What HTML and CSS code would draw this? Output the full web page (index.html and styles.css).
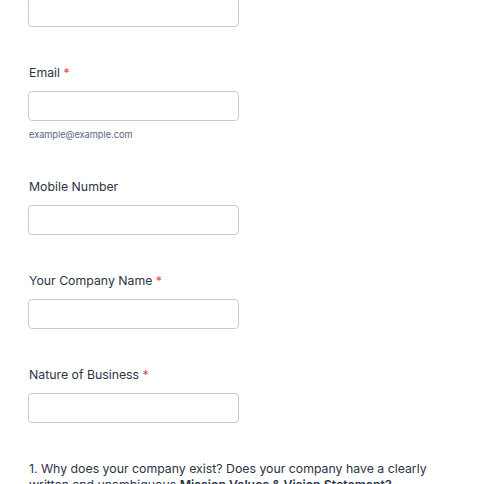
FILE: index.html
```html
<!DOCTYPE html>
<html>
<head>
<meta charset="utf-8">
<link rel="stylesheet" href="styles.css">
</head>
<body>
<form class="form">
  <div class="field">
    <input class="input" type="text">
  </div>
  <div class="field">
    <label class="label">Email <span class="req">*</span></label>
    <input class="input" type="text">
    <div class="help">example@example.com</div>
  </div>
  <div class="field">
    <label class="label">Mobile Number</label>
    <input class="input" type="text">
  </div>
  <div class="field">
    <label class="label">Your Company Name <span class="req">*</span></label>
    <input class="input" type="text">
  </div>
  <div class="field">
    <label class="label">Nature of Business <span class="req">*</span></label>
    <input class="input" type="text">
  </div>
  <div class="field">
    <p class="question">1. Why does your company exist? Does your company have a clearly written and unambiguous <b>Mission Values &amp; Vision Statement?</b></p>
  </div>
</form>
</body>
</html>
```
FILE: styles.css
```css
html, body {
  margin: 0;
  padding: 0;
  background: #ffffff;
}
body {
  font-family: Inter, "Noto Sans", sans-serif;
  color: #2c3345;
}
.form {
  display: flex;
  flex-direction: column;
  gap: 35px;
  padding: 0 0 0 28px;
  margin-top: -3px;
}
.field {
  display: flex;
  flex-direction: column;
}
.label {
  font-size: 12.3px;
  line-height: 20px;
  padding-top: 1px;
  margin-bottom: 8px;
  padding-left: 1px;
  font-weight: 400;
}
.req {
  color: #ea4545;
}
.input {
  box-sizing: border-box;
  width: 211px;
  height: 30px;
  margin: 0;
  border: 1px solid #c3cad8;
  border-radius: 4px;
  background: #fff;
}
.help {
  font-size: 9.2px;
  line-height: 12px;
  color: #57647e;
  margin-top: 8px;
  padding-left: 1px;
}
.question {
  margin: 3px 0 0 0;
  width: 420px;
  font-size: 12.3px;
  line-height: 16px;
  padding-left: 1px;
}
.question b {
  font-weight: 600;
}
```
